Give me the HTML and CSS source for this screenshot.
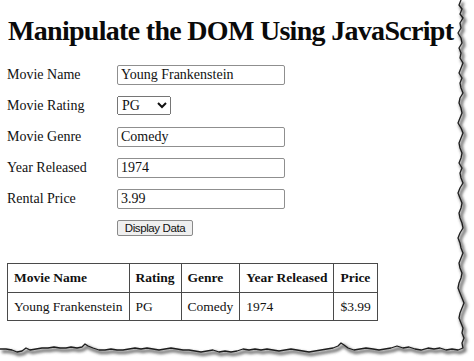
FILE: index.html
```html
<!DOCTYPE html>
<html>
<head>
<meta charset="utf-8">
<link rel="stylesheet" href="styles.css">
</head>
<body>
<div class="page">
  <h1 class="title">Manipulate the DOM Using JavaScript</h1>
  <div class="form">
    <label class="lbl">Movie Name</label>
    <input class="field" type="text" value="Young Frankenstein">
    <label class="lbl">Movie Rating</label>
    <div><select class="rating"><option>G</option><option selected>PG</option><option>PG-13</option><option>R</option></select></div>
    <label class="lbl">Movie Genre</label>
    <input class="field" type="text" value="Comedy">
    <label class="lbl">Year Released</label>
    <input class="field" type="text" value="1974">
    <label class="lbl">Rental Price</label>
    <input class="field" type="text" value="3.99">
  </div>
  <div class="actions"><button class="btn" type="button">Display Data</button></div>
  <table class="data">
    <thead>
      <tr><th>Movie Name</th><th>Rating</th><th>Genre</th><th>Year Released</th><th>Price</th></tr>
    </thead>
    <tbody>
      <tr><td>Young Frankenstein</td><td>PG</td><td>Comedy</td><td>1974</td><td>$3.99</td></tr>
    </tbody>
  </table>
</div>
<svg class="torn" width="474" height="361" viewBox="0 0 474 361" xmlns="http://www.w3.org/2000/svg">
  <defs>
    <filter id="blur" x="-10%" y="-10%" width="120%" height="120%"><feGaussianBlur stdDeviation="1.6"/></filter>
  </defs>
  <path class="shade" transform="translate(2,2.5)" filter="url(#blur)" d="M461,0 L459,5 462,9 460,14 463,18 460,23 461,28 458,33 461,38 462,43 459,48 461,53 460,58 463,63 461,68 459,73 462,78 460,83 461,88 463,93 460,98 459,103 461,108 462,113 460,118 458,123 461,128 463,133 461,138 459,143 460,148 462,153 461,158 459,163 462,168 460,173 461,178 463,183 460,188 458,193 460,198 462,203 461,208 459,213 460,218 462,223 463,228 460,233 458,238 460,243 461,248 463,253 461,258 459,263 460,268 462,273 461,278 459,283 458,288 460,293 462,298 464,303 462,308 460,313 459,318 461,323 463,328 462,333 464,338 462,343 463,348 458,350 452,349 446,350 440,348 434,349 428,348 421,350 415,349 409,347 403,348 397,346 391,348 385,349 379,350 373,349 366,348 360,349 354,350 348,348 344,345 341,343 338,346 333,348 327,349 321,350 315,351 309,352 303,351 297,350 291,349 285,350 279,351 273,350 267,349 261,350 255,349 249,350 243,349 237,351 231,352 225,351 219,352 213,350 207,351 201,352 195,351 189,350 183,350 177,349 171,348 165,349 159,350 153,349 147,348 141,349 135,348 129,349 123,350 117,350 111,349 105,350 99,350 93,348 88,346 85,344 82,347 77,348 71,347 66,348 60,348 54,347 48,348 42,348 36,349 30,350 26,348 22,351 17,352 12,350 6,349 0,349"/>
  <path class="edge" d="M461,0 L459,5 462,9 460,14 463,18 460,23 461,28 458,33 461,38 462,43 459,48 461,53 460,58 463,63 461,68 459,73 462,78 460,83 461,88 463,93 460,98 459,103 461,108 462,113 460,118 458,123 461,128 463,133 461,138 459,143 460,148 462,153 461,158 459,163 462,168 460,173 461,178 463,183 460,188 458,193 460,198 462,203 461,208 459,213 460,218 462,223 463,228 460,233 458,238 460,243 461,248 463,253 461,258 459,263 460,268 462,273 461,278 459,283 458,288 460,293 462,298 464,303 462,308 460,313 459,318 461,323 463,328 462,333 464,338 462,343 463,348 458,350 452,349 446,350 440,348 434,349 428,348 421,350 415,349 409,347 403,348 397,346 391,348 385,349 379,350 373,349 366,348 360,349 354,350 348,348 344,345 341,343 338,346 333,348 327,349 321,350 315,351 309,352 303,351 297,350 291,349 285,350 279,351 273,350 267,349 261,350 255,349 249,350 243,349 237,351 231,352 225,351 219,352 213,350 207,351 201,352 195,351 189,350 183,350 177,349 171,348 165,349 159,350 153,349 147,348 141,349 135,348 129,349 123,350 117,350 111,349 105,350 99,350 93,348 88,346 85,344 82,347 77,348 71,347 66,348 60,348 54,347 48,348 42,348 36,349 30,350 26,348 22,351 17,352 12,350 6,349 0,349"/>
</svg>
</body>
</html>
```
FILE: styles.css
```css
html, body {
  margin: 0;
  padding: 0;
  background: #fff;
}
body {
  width: 474px;
  height: 361px;
  overflow: hidden;
  position: relative;
  font-family: "Liberation Serif", "Times New Roman", serif;
  color: #111;
}
.page {
  padding: 14px 0 0 7px;
}
.title {
  margin: 0 0 11px 1px;
  font-size: 28px;
  line-height: 34px;
  letter-spacing: -0.7px;
  font-weight: bold;
  color: #0a0a0a;
  white-space: nowrap;
}
.form {
  display: grid;
  grid-template-columns: 110px auto;
  grid-auto-rows: 31px;
  align-items: center;
  justify-items: start;
}
.lbl {
  font-size: 14px;
}
.field {
  box-sizing: border-box;
  width: 168px;
  height: 20px;
  margin: 0;
  padding: 1px 3px;
  border: 1px solid #8f8f8f;
  border-radius: 2px;
  font-family: "Liberation Serif", "Times New Roman", serif;
  font-size: 14px;
  color: #111;
  background: #fff;
}
.rating {
  box-sizing: border-box;
  width: 54px;
  height: 19px;
  margin: 0;
  font-family: "Liberation Serif", "Times New Roman", serif;
  font-size: 14px;
  color: #111;
}
.actions {
  padding: 6px 0 0 110px;
  height: 16px;
}
.btn {
  display: block;
  box-sizing: border-box;
  height: 16px;
  width: 76px;
  margin: 0;
  padding: 0;
  font-family: "Liberation Sans", Arial, sans-serif;
  font-size: 11.5px;
  letter-spacing: -0.4px;
  line-height: 14px;
  white-space: nowrap;
  color: #111;
  background: #efefef;
  border: 1px solid #8a8a8a;
  border-radius: 2px;
}
.data {
  margin-top: 27px;
  border-collapse: collapse;
  font-size: 13.5px;
}
.data th, .data td {
  border: 1px solid #4a4a4a;
  padding: 6px 6px;
  line-height: 15.5px;
  text-align: left;
  white-space: nowrap;
}
.torn {
  position: absolute;
  left: 0;
  top: 0;
  pointer-events: none;
}
.torn .edge {
  fill: none;
  stroke: #1e1e1e;
  stroke-width: 1.3;
  stroke-linejoin: round;
}
.torn .shade {
  fill: none;
  stroke: #6a6a6a;
  stroke-width: 3;
  stroke-linejoin: round;
}
```
